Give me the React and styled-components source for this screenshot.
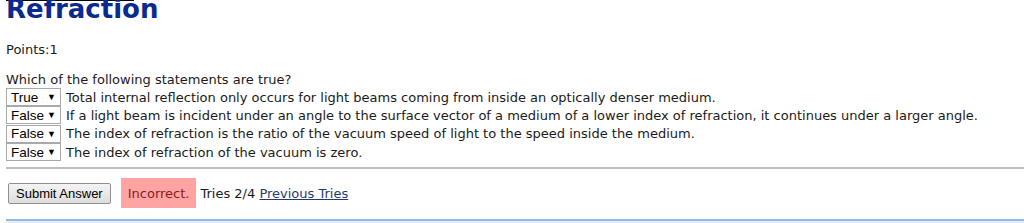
import React from 'react';
import styled, { createGlobalStyle } from 'styled-components';

const GlobalStyle = createGlobalStyle`
  body {
    margin: 0;
    background: #ffffff;
    font-family: "DejaVu Sans", Verdana, sans-serif;
    font-size: 13px;
    color: #1a1a1a;
  }
`;

const Page = styled.div`
  padding-left: 6px;
  overflow: hidden;
  height: 223px;
`;

const TitleRule = styled.div`
  width: 128px;
  height: 1px;
  background: #000;
`;

const Title = styled.h1`
  margin: -6px 0 0 0;
  font-size: 26px;
  line-height: 28px;
  font-weight: bold;
  color: #0b2a8f;
`;

const Points = styled.div`
  margin-top: 19px;
  line-height: 16px;
`;

const Question = styled.div`
  margin-top: 14px;
  line-height: 16px;
`;

const Statements = styled.div`
  display: flex;
  flex-direction: column;
  gap: 0.4px;
  margin-top: 0;
`;

const Row = styled.div`
  display: flex;
  align-items: center;
  gap: 5px;
  height: 18px;
`;

const Select = styled.div`
  box-sizing: border-box;
  width: ${({ $w }) => $w}px;
  height: 18px;
  border: 1px solid #a9a9a9;
  background: #fff;
  display: flex;
  align-items: center;
  justify-content: space-between;
  padding: 0 4px 0 4px;
  font-family: "Liberation Sans", Arial, sans-serif;
  font-size: 13.5px;
  color: #000;
`;

const Arrow = styled.span`
  font-size: 9px;
`;

const Rule = styled.div`
  height: 2px;
  background: #c0c0c0;
  margin-top: 6px;
`;

const Actions = styled.div`
  display: flex;
  align-items: center;
  margin-top: 9px;
  height: 30px;
`;

const Button = styled.button`
  margin-left: 2px;
  height: 21px;
  padding: 0 7px;
  border: 1px solid #8f8f8f;
  border-radius: 2px;
  background: linear-gradient(#f4f4f4, #dedede);
  font-family: "Liberation Sans", Arial, sans-serif;
  font-size: 13px;
  color: #000;
`;

const Feedback = styled.span`
  margin-left: 10px;
  height: 30px;
  display: flex;
  align-items: center;
  padding: 0 7px;
  background: #ffa3a3;
  color: #8b1a1a;
`;

const Tries = styled.span`
  margin-left: 4px;
`;

const TryLink = styled.a`
  color: #1f3a6e;
  text-decoration: underline;
`;

const InfoBox = styled.div`
  margin-top: 11px;
  height: 20px;
  border-top: 2px solid #8dbbea;
  background: #e8e8fb;
`;

const statements = [
  { value: 'True', text: 'Total internal reflection only occurs for light beams coming from inside an optically denser medium.' },
  { value: 'False', text: 'If a light beam is incident under an angle to the surface vector of a medium of a lower index of refraction, it continues under a larger angle.' },
  { value: 'False', text: 'The index of refraction is the ratio of the vacuum speed of light to the speed inside the medium.' },
  { value: 'False', text: 'The index of refraction of the vacuum is zero.' },
];

export default function App() {
  return (
    <Page>
      <GlobalStyle />
      <TitleRule />
      <Title>Refraction</Title>
      <Points>Points:1</Points>
      <Question>Which of the following statements are true?</Question>
      <Statements>
        {statements.map((s, i) => (
          <Row key={i}>
            <Select $w={55}>
              {s.value}
              <Arrow>▼</Arrow>
            </Select>
            {s.text}
          </Row>
        ))}
      </Statements>
      <Rule />
      <Actions>
        <Button>Submit Answer</Button>
        <Feedback>Incorrect.</Feedback>
        <Tries>
          Tries 2/4 <TryLink href="#">Previous Tries</TryLink>
        </Tries>
      </Actions>
      <InfoBox />
    </Page>
  );
}
